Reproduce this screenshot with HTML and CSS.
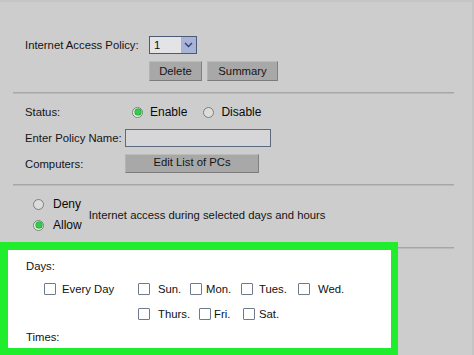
FILE: index.html
```html
<!DOCTYPE html>
<html>
<head>
<meta charset="utf-8">
<link rel="stylesheet" href="styles.css">
</head>
<body>
<div class="page">
  <section class="sec sec-policy">
    <div class="row row-policy">
      <span class="lbl lbl-policy">Internet Access Policy:</span>
      <div class="select">
        <span class="sel-val">1</span>
        <span class="sel-btn"><svg width="9" height="6" viewBox="0 0 9 6"><path d="M1 1 L4.5 4.5 L8 1" fill="none" stroke="#2c3e78" stroke-width="1.3"/></svg></span>
      </div>
    </div>
    <div class="row row-btns">
      <button class="btn btn-del">Delete</button>
      <button class="btn btn-sum">Summary</button>
    </div>
  </section>
  <div class="rule"></div>
  <section class="sec sec-status">
    <div class="row row-status">
      <span class="lbl lbl-status">Status:</span>
      <span class="opt"><span class="radio on"></span><span class="opt-txt">Enable</span></span>
      <span class="opt opt-dis"><span class="radio"></span><span class="opt-txt">Disable</span></span>
    </div>
    <div class="row row-name">
      <span class="lbl lbl-name">Enter Policy Name:</span>
      <span class="input"></span>
    </div>
    <div class="row row-pcs">
      <span class="lbl lbl-name">Computers:</span>
      <button class="btn btn-pcs">Edit List of PCs</button>
    </div>
  </section>
  <div class="rule"></div>
  <section class="sec sec-access">
    <div class="choices">
      <span class="opt"><span class="radio"></span><span class="opt-txt">Deny</span></span>
      <span class="opt"><span class="radio on"></span><span class="opt-txt">Allow</span></span>
    </div>
    <span class="access-txt">Internet access during selected days and hours</span>
  </section>
  <div class="bottom">
    <div class="highlight">
      <div class="hl-row">Days:</div>
      <div class="days days-1">
        <span class="day g7"><span class="cb"></span>Every Day</span>
        <span class="day g9"><span class="cb"></span>Sun.</span>
        <span class="day g5"><span class="cb"></span>Mon.</span>
        <span class="day g7"><span class="cb"></span>Tues.</span>
        <span class="day g9"><span class="cb"></span>Wed.</span>
      </div>
      <div class="days days-2">
        <span class="day g9"><span class="cb"></span>Thurs.</span>
        <span class="day g4"><span class="cb"></span>Fri.</span>
        <span class="day g5"><span class="cb"></span>Sat.</span>
      </div>
      <div class="hl-row times">Times:</div>
    </div>
    <div class="rule-stub"></div>
  </div>
</div>
</body>
</html>
```

FILE: styles.css
```css
* { box-sizing: border-box; }
html, body { margin: 0; padding: 0; }
body {
  background: #cdcdcd;
  font-family: "Liberation Sans", Arial, sans-serif;
  font-size: 11.3px;
  color: #141414;
  width: 474px;
  height: 355px;
  overflow: hidden;
}
.page {
  height: 355px;
  border-top: 2px solid #c6c6c6;
  border-right: 2px solid #c4c4c4;
}
.sec { padding-left: 25px; }
.row { display: flex; align-items: center; }
.sec-policy { padding-top: 34px; }
.row-policy { height: 18px; }
.lbl-policy { width: 124px; }
.select {
  width: 48px; height: 18px;
  display: flex;
  border: 1px solid #4c5a78;
  background: #e4e4e6;
}
.sel-val { flex: 1; padding-left: 4px; line-height: 16px; color: #111; }
.sel-btn {
  width: 15px; height: 16px;
  background: #a8b3d6;
  display: flex; align-items: center; justify-content: center;
}
.row-btns { margin-top: 7px; padding-left: 124px; gap: 5px; }
.btn {
  font-family: inherit; font-size: 11.3px; color: #151515;
  background: #a8a8a8;
  border: 1px solid #9a9a9a;
  border-right-color: #808080;
  border-bottom-color: #7c7c7c;
  border-top-color: #bcbcbc;
  border-left-color: #b4b4b4;
  padding: 0; margin: 0;
  height: 20px;
}
.btn-del { width: 53px; }
.btn-sum { width: 71px; }
.rule {
  margin: 11px 18px 0 13px;
  height: 2px;
  background: #a6a6a6;
  border-bottom: 1px solid #bababa;
}
.sec-status { padding-top: 9px; }
.row-status { height: 18px; }
.lbl-status { width: 107px; }
.opt { display: inline-flex; align-items: center; }
.opt-txt { font-size: 12px; color: #0a0a0a; margin-left: 7px; }
.opt-dis { margin-left: 16px; }
.radio {
  width: 11px; height: 11px; border-radius: 50%;
  border: 1px solid #7d7d85;
  background: #dcdcdc;
  display: inline-block;
  position: relative;
}
.radio.on { border-color: #6f8a6f; background: #e8f0e8; }
.radio.on::after {
  content: ""; position: absolute; left: 1.5px; top: 1.5px;
  width: 6px; height: 6px; border-radius: 50%;
  background: #2fcf4a;
  box-shadow: 0 0 0 0.5px #1c7a2c;
}
.row-name { margin-top: 8px; height: 18px; }
.lbl-name { width: 100px; }
.input {
  width: 146px; height: 18px;
  border: 1px solid #5c6a80;
  background: #d6d6d8;
}
.row-pcs { margin-top: 7px; height: 19px; }
.btn-pcs { width: 134px; height: 19px; padding-bottom: 3px; }
.sec-access {
  display: flex; align-items: center;
  padding-left: 33px;
  margin-top: 10px;
}
.choices { display: flex; flex-direction: column; gap: 5px; }
.choices .opt { height: 16px; }
.choices .opt-txt { margin-left: 9px; }
.access-txt { margin-left: 7px; padding-top: 1px; }
.bottom { display: flex; align-items: flex-start; margin-top: 9px; }
.highlight {
  width: 398px;
  background: #fff;
  border: 8px solid #20ee2c;
  border-right-width: 7px;
  border-bottom-width: 7px;
  padding: 9px 0 4px 18px;
  color: #111;
}
.hl-row { height: 14px; line-height: 14px; }
.days { display: grid; align-items: center; height: 14px; }
.days-1 { margin-top: 9px; padding-left: 18px; grid-template-columns: 94px 52px 51px 57px auto; }
.days-2 { margin-top: 11px; padding-left: 112px; grid-template-columns: 61px 44px auto; }
.day { display: flex; align-items: center; white-space: nowrap; }
.cb {
  width: 12px; height: 12px;
  border: 1px solid #6f7a8c;
  border-radius: 1px;
  background: #fff;
  flex: none;
}
.g4 .cb { margin-right: 3px; }
.g5 .cb { margin-right: 4px; }
.g7 .cb { margin-right: 6px; }
.g9 .cb { margin-right: 8px; }
.times { margin-top: 9px; }
.rule-stub {
  width: 56px;
  margin-top: 5px;
  height: 2px;
  background: #a6a6a6;
  border-bottom: 1px solid #bababa;
}
```
